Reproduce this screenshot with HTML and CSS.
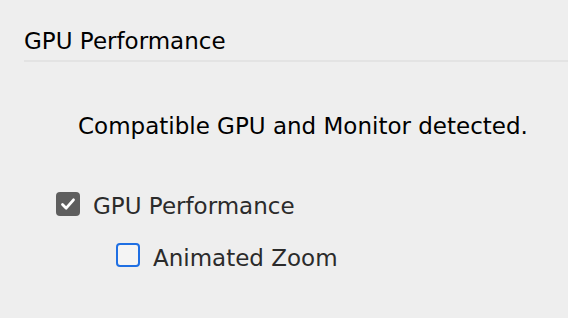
FILE: index.html
```html
<!DOCTYPE html>
<html>
<head>
<meta charset="utf-8">
<link rel="stylesheet" href="styles.css">
</head>
<body>
<div class="panel">
  <div class="header"><span class="title">GPU Performance</span></div>
  <div class="content">
    <p class="status">Compatible GPU and Monitor detected.</p>
    <div class="option">
      <span class="check checked"><svg width="24" height="24" viewBox="0 0 24 24"><path d="M6.5 12.5 L10.2 16.2 L17.5 7.8" fill="none" stroke="#fff" stroke-width="2.8" stroke-linecap="round" stroke-linejoin="round"/></svg></span>
      <span class="label">GPU Performance</span>
    </div>
    <div class="option sub">
      <span class="check empty"></span>
      <span class="label">Animated Zoom</span>
    </div>
  </div>
</div>
</body>
</html>
```
FILE: styles.css
```css
html, body {
  margin: 0;
  padding: 0;
  background: #eeeeee;
  width: 568px;
  height: 318px;
  overflow: hidden;
}
.panel {
  font-family: "DejaVu Sans", "Liberation Sans", sans-serif;
  font-size: 23px;
  color: #000;
}
.header {
  margin-left: 24px;
  padding-top: 27px;
  height: 33px;
  border-bottom: 2px solid #e3e3e3;
  line-height: 28px;
}
.content {
  padding-left: 56px;
}
.status {
  margin: 50px 0 0 22px;
  line-height: 28px;
}
.option {
  display: flex;
  align-items: flex-start;
  gap: 13px;
  color: #2b2b2b;
  line-height: 28px;
  margin-top: 52px;
}
.option.sub {
  margin-left: 60px;
  margin-top: 24px;
}
.option.sub .check {
  margin-top: -1px;
}
.check {
  width: 24px;
  height: 24px;
  box-sizing: border-box;
  border-radius: 4px;
  display: inline-flex;
  flex: none;
}
.check.checked {
  background: #5e5e5e;
}
.check.empty {
  border: 2px solid #1f6fe3;
  background: #f4f4f4;
}
```
